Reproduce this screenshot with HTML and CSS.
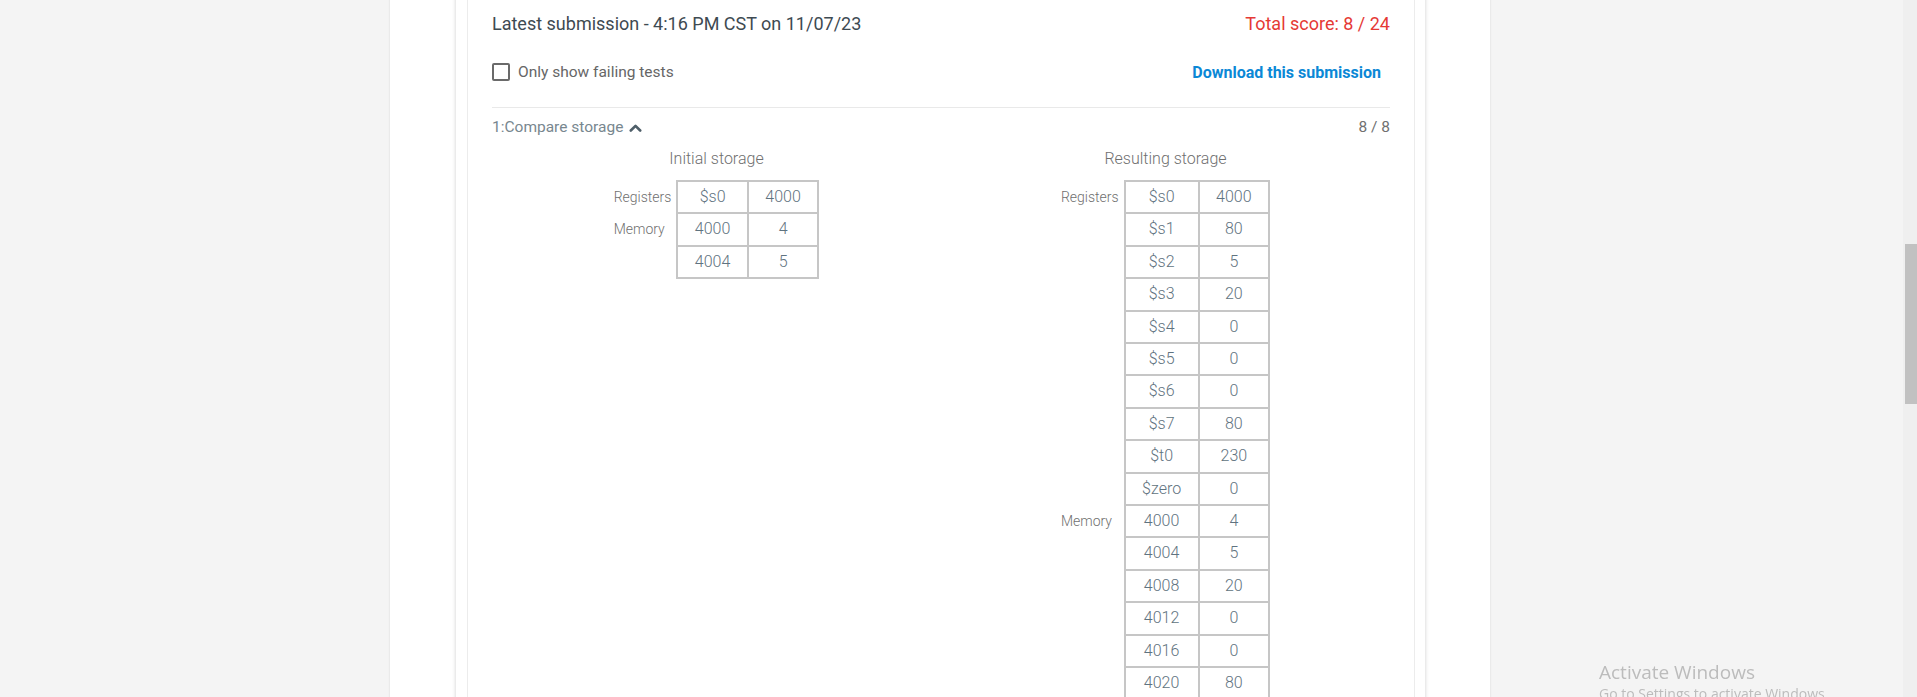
FILE: index.html
```html
<!DOCTYPE html>
<html lang="en">
<head>
<meta charset="utf-8">
<title>Submission</title>
<link rel="stylesheet" href="styles.css">
</head>
<body>
<div class="page">
  <div class="outer">
    <div class="middle">
      <div class="inner">
        <div class="head-row">
          <div class="latest">Latest submission - 4:16 PM CST on 11/07/23</div>
          <div class="total">Total score: 8 / 24</div>
        </div>
        <div class="tools-row">
          <label class="check">
            <span class="box"></span>
            <span class="check-text">Only show failing tests</span>
          </label>
          <a class="download">Download this submission</a>
        </div>
        <div class="test-row">
          <div class="test-name">1:Compare storage
            <svg class="chev" width="13" height="9" viewBox="0 0 13 9"><polyline points="1.8,7.5 6.5,2.8 11.2,7.5" fill="none" stroke="#4f5f69" stroke-width="2.6" stroke-linecap="round" stroke-linejoin="round"/></svg>
          </div>
          <div class="test-score">8 / 8</div>
        </div>
        <div class="storage">
          <div class="col">
            <div class="col-title">Initial storage</div>
            <table class="st">
              <tr><td class="lbl">Registers</td><td>$s0</td><td>4000</td></tr>
              <tr><td class="lbl">Memory</td><td>4000</td><td>4</td></tr>
              <tr><td class="lbl"></td><td>4004</td><td>5</td></tr>
            </table>
          </div>
          <div class="col">
            <div class="col-title">Resulting storage</div>
            <table class="st">
              <tr><td class="lbl">Registers</td><td>$s0</td><td>4000</td></tr>
              <tr><td class="lbl"></td><td>$s1</td><td>80</td></tr>
              <tr><td class="lbl"></td><td>$s2</td><td>5</td></tr>
              <tr><td class="lbl"></td><td>$s3</td><td>20</td></tr>
              <tr><td class="lbl"></td><td>$s4</td><td>0</td></tr>
              <tr><td class="lbl"></td><td>$s5</td><td>0</td></tr>
              <tr><td class="lbl"></td><td>$s6</td><td>0</td></tr>
              <tr><td class="lbl"></td><td>$s7</td><td>80</td></tr>
              <tr><td class="lbl"></td><td>$t0</td><td>230</td></tr>
              <tr><td class="lbl"></td><td>$zero</td><td>0</td></tr>
              <tr><td class="lbl">Memory</td><td>4000</td><td>4</td></tr>
              <tr><td class="lbl"></td><td>4004</td><td>5</td></tr>
              <tr><td class="lbl"></td><td>4008</td><td>20</td></tr>
              <tr><td class="lbl"></td><td>4012</td><td>0</td></tr>
              <tr><td class="lbl"></td><td>4016</td><td>0</td></tr>
              <tr><td class="lbl"></td><td>4020</td><td>80</td></tr>
            </table>
          </div>
        </div>
      </div>
    </div>
  </div>
</div>
<div class="scrollbar"><div class="thumb"></div></div>
<div class="watermark">
  <div class="wm-title">Activate Windows</div>
  <div class="wm-sub">Go to Settings to activate Windows.</div>
</div>
</body>
</html>
```
FILE: styles.css
```css
html, body {
  margin: 0;
  padding: 0;
  height: 100%;
  overflow: hidden;
}
body {
  background: #f4f4f4;
  font-family: Roboto, "Liberation Sans", sans-serif;
}
.page {
  display: flex;
  padding-left: 390px;
  margin-top: -20px;
}
.outer {
  box-sizing: border-box;
  width: 1100px;
  background: #fff;
  box-shadow: 0 0 2px rgba(0, 0, 0, 0.12);
  padding: 0 65px 0 66px;
}
.middle {
  background: #fff;
  box-shadow: 0 0 4px rgba(0, 0, 0, 0.2);
  padding: 0 10px 40px 11px;
}
.inner {
  border: 1px solid #ececec;
  border-top: none;
  padding: 31px 24px 40px;
}
.head-row {
  display: flex;
  justify-content: space-between;
  align-items: center;
  height: 24px;
  font-size: 18px;
}
.latest { color: #3e4a52; }
.total { color: #e53935; }
.tools-row {
  margin-top: 25px;
  height: 24px;
  padding-bottom: 23px;
  border-bottom: 1px solid #e9e9e9;
  display: flex;
  justify-content: space-between;
  align-items: center;
}
.check {
  display: flex;
  align-items: center;
  gap: 8px;
}
.box {
  box-sizing: border-box;
  width: 18px;
  height: 18px;
  border: 2px solid #6a6a6a;
  border-radius: 2px;
  background: #fff;
}
.check-text {
  font-size: 15.5px;
  color: #666;
}
.download {
  font-size: 16px;
  font-weight: 700;
  color: #0b88d6;
  margin-right: 9px;
}
.test-row {
  padding-top: 8px;
  line-height: 22px;
  display: flex;
  justify-content: space-between;
  align-items: center;
  font-size: 15.5px;
}
.test-name {
  color: #78878f;
  display: flex;
  align-items: center;
  gap: 6px;
}
.chev { display: block; }
.test-score { color: #707070; }
.storage {
  margin-top: 11px;
  display: grid;
  grid-template-columns: 1fr 1fr;
}
.col {
  display: flex;
  flex-direction: column;
  align-items: center;
}
.col-title {
  font-size: 16px;
  font-weight: 300;
  color: #6f6f6f;
  line-height: 20px;
  margin-bottom: 11px;
}
.st {
  border-collapse: collapse;
  font-size: 16px;
  font-weight: 300;
}
.st td {
  border: 2px solid #c6c6c6;
  padding: 4px 16.5px;
  line-height: 22.4px;
  text-align: center;
  color: #5f7380;
}
.st td.lbl {
  border: none;
  padding: 0 5px 0 0;
  text-align: left;
  font-size: 14px;
  color: #707070;
}
.scrollbar {
  position: fixed;
  top: 0;
  right: 0;
  width: 14px;
  height: 100%;
  background: #efefef;
}
.thumb {
  position: absolute;
  top: 244px;
  left: 2px;
  right: 0;
  height: 160px;
  background: #c1c1c1;
}
.watermark {
  position: fixed;
  left: 1599px;
  top: 660px;
  font-family: "Open Sans", "Noto Sans", sans-serif;
  color: #bcbcbc;
  white-space: nowrap;
}
.wm-title {
  font-size: 19px;
  line-height: 25px;
}
.wm-sub {
  font-size: 14px;
  line-height: 18px;
}
```
